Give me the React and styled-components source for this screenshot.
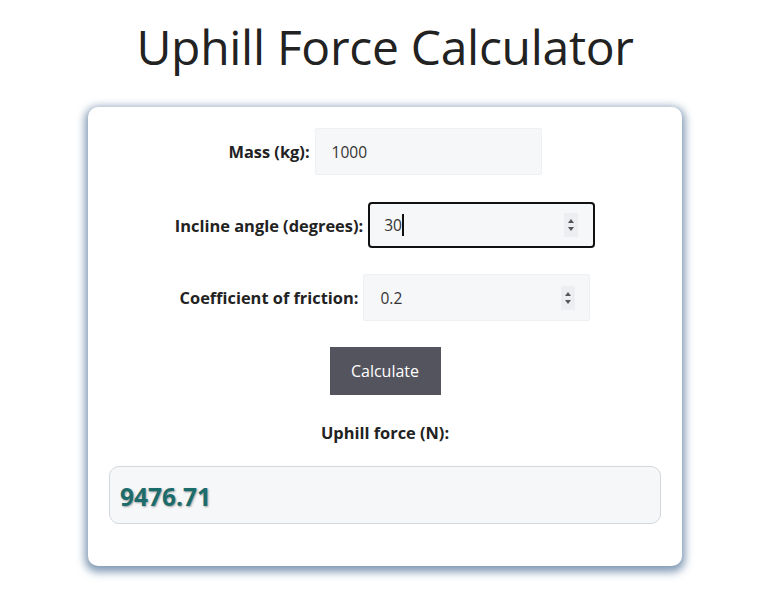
import React from "react";
import styled, { createGlobalStyle } from "styled-components";

const Global = createGlobalStyle`
  html, body { margin: 0; padding: 0; background: #ffffff; }
  body { font-family: "Open Sans", "Noto Sans", sans-serif; color: #222; }
  * { box-sizing: border-box; }
`;

const Page = styled.div`
  display: flex;
  flex-direction: column;
  align-items: center;
  padding: 14px 13px 40px 0;
`;

const Title = styled.h1`
  margin: 0 0 27px;
  font-size: 48px;
  font-weight: 400;
  line-height: 66px;
  color: #222;
  letter-spacing: -0.3px;
`;

const Card = styled.div`
  width: 594px;
  background: #fff;
  border-radius: 10px;
  padding: 21px 21px 42px;
  box-shadow: 0 3px 8px 3px rgba(62, 100, 140, 0.65);
  display: flex;
  flex-direction: column;
  align-items: center;
`;

const Row = styled.div`
  display: flex;
  align-items: center;
  gap: 5px;
  margin-bottom: ${(p) => p.$mb}px;
`;

const Label = styled.label`
  font-weight: 700;
  font-size: 16.4px;
  color: #222;
  letter-spacing: 0;
`;

const FieldWrap = styled.div`
  position: relative;
  width: 227px;
  height: ${(p) => (p.$focus ? 46 : 47)}px;
`;

const Input = styled.input`
  width: 100%;
  height: 100%;
  border: ${(p) => (p.$focus ? "2px solid #111" : "1px solid #eef0f2")};
  border-radius: ${(p) => (p.$focus ? 4 : 2)}px;
  background: #f6f7f9;
  padding: 0 0 0 ${(p) => (p.$focus ? 14 : 16)}px;
  font-family: "Open Sans", "Noto Sans", sans-serif;
  font-size: 15.5px;
  color: #333;
  outline: none;
`;

const Caret = styled.span`
  position: absolute;
  left: 34px;
  top: 12px;
  width: 1.5px;
  height: 22px;
  background: #111;
`;

const Spinner = styled.span`
  position: absolute;
  right: ${(p) => p.$right}px;
  top: 50%;
  transform: translateY(-50%);
  width: 14px;
  height: 24px;
  background: #eceef1;
  display: flex;
  flex-direction: column;
  align-items: center;
  justify-content: center;
  gap: 4px;
`;

const Tri = styled.span`
  width: 0;
  height: 0;
  border-left: 3.5px solid transparent;
  border-right: 3.5px solid transparent;
  ${(p) => (p.$up ? "border-bottom: 4px solid #555;" : "border-top: 4px solid #555;")}
`;

const Button = styled.button`
  width: 111px;
  height: 48px;
  border: none;
  background: #54545e;
  color: #fff;
  font-family: "Open Sans", "Noto Sans", sans-serif;
  font-size: 16px;
  margin-bottom: 26px;
  cursor: pointer;
`;

const ResultLabel = styled.div`
  font-weight: 700;
  font-size: 16.4px;
  line-height: 24px;
  color: #222;
  margin-bottom: 21px;
`;

const ResultBox = styled.div`
  align-self: stretch;
  height: 58px;
  border: 1px solid #d4d7dc;
  border-radius: 10px;
  background: #f6f7f9;
  display: flex;
  align-items: center;
  padding: 2px 10px 0;
  font-size: 24.5px;
  font-weight: 700;
  color: #1d6c6c;
  text-shadow: 1px 1px 2px rgba(0, 0, 0, 0.35);
`;

function Field({ label, value, focus, spinner, mb }) {
  return (
    <Row $mb={mb}>
      <Label>{label}</Label>
      <FieldWrap $focus={focus}>
        <Input $focus={focus} defaultValue={value} readOnly />
        {focus && <Caret />}
        {spinner && (
          <Spinner $right={focus ? 17 : 15}>
            <Tri $up />
            <Tri />
          </Spinner>
        )}
      </FieldWrap>
    </Row>
  );
}

export default function App() {
  return (
    <>
      <Global />
      <Page>
        <Title>Uphill Force Calculator</Title>
        <Card>
          <Field label="Mass (kg):" value="1000" mb={27} />
          <Field label="Incline angle (degrees):" value="30" focus spinner mb={26} />
          <Field label="Coefficient of friction:" value="0.2" spinner mb={26} />
          <Button>Calculate</Button>
          <ResultLabel>Uphill force (N):</ResultLabel>
          <ResultBox>9476.71</ResultBox>
        </Card>
      </Page>
    </>
  );
}
